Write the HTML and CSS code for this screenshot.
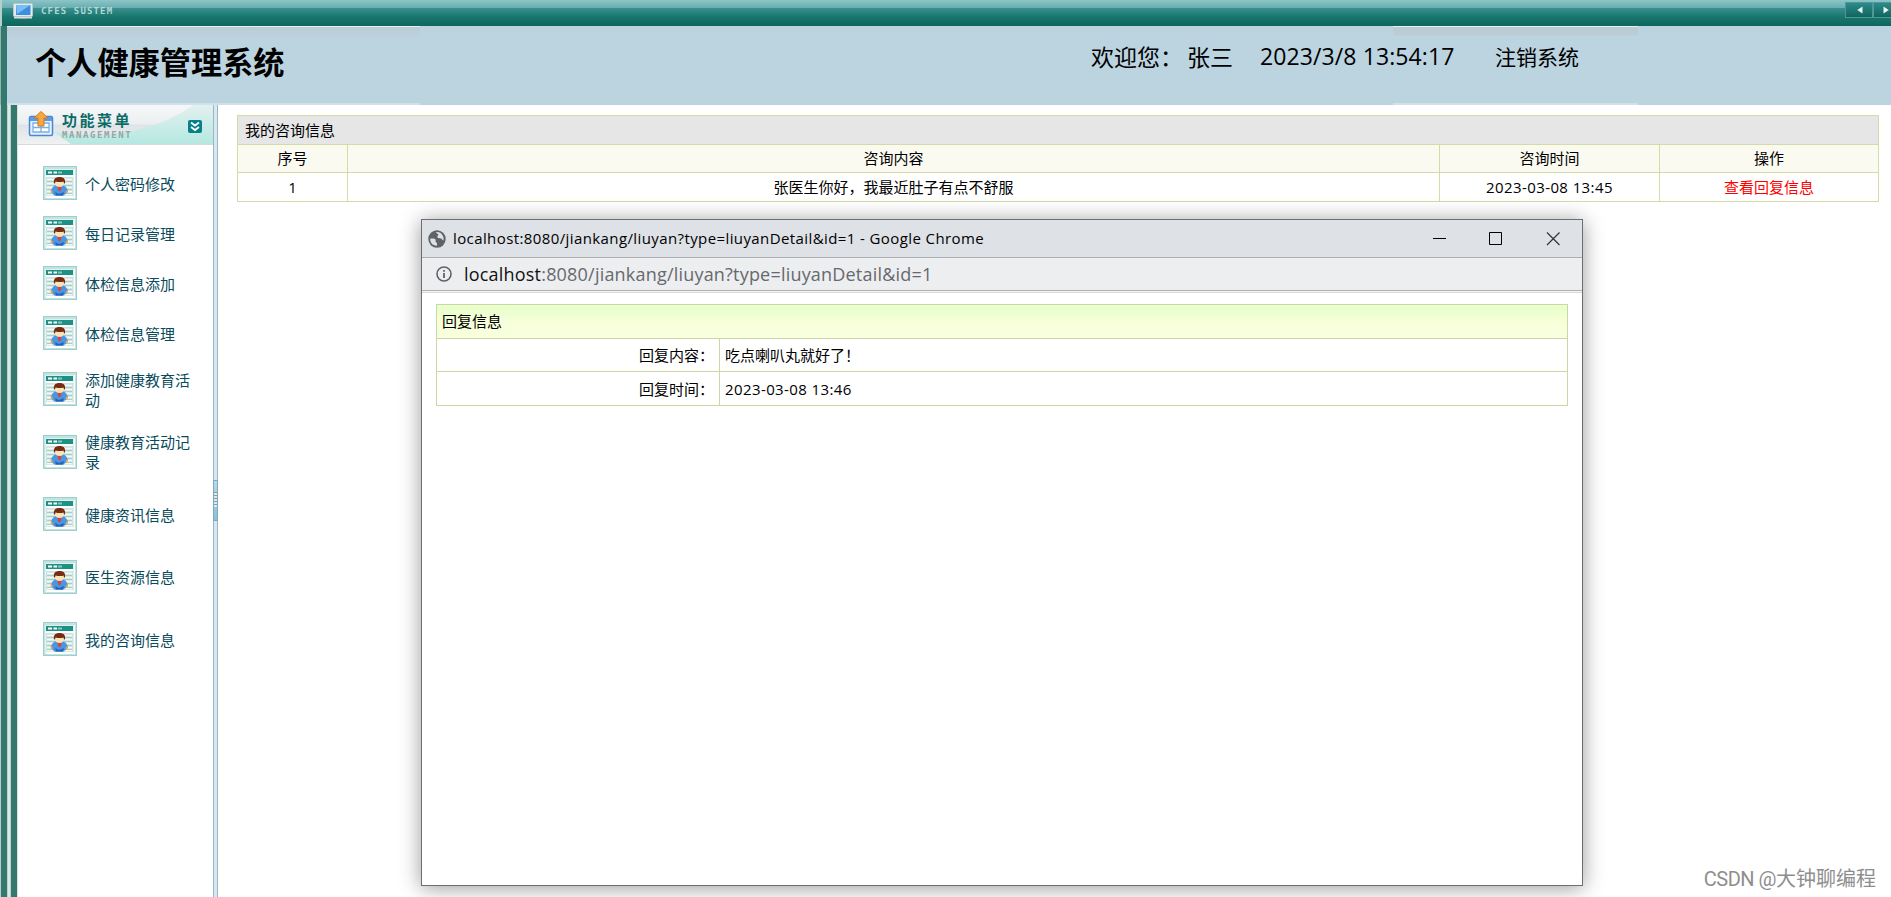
FILE: index.html
```
<!DOCTYPE html>
<html lang="zh-CN">
<head>
    <meta charset="UTF-8">
    <meta name="viewport" content="width=device-width, initial-scale=1.0">
    <title>个人健康管理系统</title>
    <link rel="stylesheet" href="styles.css">
</head>
<body>

<svg class="defs" width="0" height="0">
    <linearGradient id="wave" x1="0" y1="0" x2="0" y2="1">
        <stop offset="0" stop-color="#e3f1ef"/>
        <stop offset="1" stop-color="#b5e8e1"/>
    </linearGradient>
    <symbol id="user-card" viewBox="0 0 34 34">
        <rect x=".5" y=".5" width="33" height="33" fill="#c3e2e0" stroke="#9fcfcd"/>
        <path d="M32 3v29H3v-1h28V3z" fill="#fff"/>
        <rect x="2.500" y="3.500" width="28" height="28" fill="#fff"/>
        <rect x="3" y="4" width="27" height="5" fill="#1c9185"/>
        <path d="M5 6.500h4M10.500 6.500h3.500" stroke="#fff" stroke-width="2"/>
        <path d="M15 6.500h4" stroke="#8cc8c0" stroke-width="2"/>
        <rect x="3" y="11" width="27" height="19" fill="#cfe3e0"/>
        <path d="M4 13.500h25M4 17.500h25M4 21.500h25M4 25.500h25M4 28.500h25" stroke="#f3faf8" stroke-width="1.500"/>
        <path d="M4 15.500h25M4 19.500h25M4 23.500h25M4 27.500h25" stroke="#a9cdc8"/>
        <path d="M8 25c.5-3.500 3-5.500 5.500-5.500h6c2.500 0 4.500 2 5.500 5.500l-2.500 3-2.500 1.700h-8L9.500 28z" fill="#4a96e6"/>
        <path d="M12 26l4 2 5-2-1 3.500h-7z" fill="#2563b8"/>
        <path d="M14.500 20h4l-.5 4-1.500 1.500L15 24z" fill="#dc4238"/>
        <path d="M12 16c0-3 2-3.500 4.500-3.500s4.500.5 4.500 3.500-1.500 5-4.500 5-4.500-2-4.500-5z" fill="#fde4b5"/>
        <path d="M11 17.500c-.8-4.500 1.500-6.500 5.500-6.500s6.300 2 5.500 6.500h-1l-.5-2c-2 .8-5 .8-8 0l-.5 2z" fill="#762b12"/>
        <path d="M8 24l1.800 1.500-.3 2.500L7.500 26zM24.500 24l-1.800 1.500.3 2.500 2-2z" fill="#f5a13c"/>
    </symbol>
</svg>

<div class="topbar">
    <svg class="monitor" width="21" height="17" viewBox="0 0 21 17">
        <rect x=".5" y=".5" width="19" height="13" rx="1" fill="#e6eaee" stroke="#b8c6ce"/>
        <rect x="3" y="2" width="14.500" height="10" fill="#3b8fe0"/>
        <path d="M3 2h14.500L4 11z" fill="#7bbcf2"/>
        <path d="M1 14h18v1.500H1z" fill="#d8dde2"/>
        <path d="M7 15h6v1H7z" fill="#a8a8a0"/>
    </svg>
    <span class="brand">CFES SUSTEM</span>
    <div class="arrows">
        <svg viewBox="0 0 28 16"><path d="M18 4v8l-6-4z" fill="#e6f4f2"/></svg>
        <svg viewBox="0 0 28 16"><path d="M10 4v8l6-4z" fill="#e6f4f2"/></svg>
    </div>
</div>

<div class="header">
    <h1>个人健康管理系统</h1>
    <div class="welcome">
        <span class="hello">欢迎您：</span>
        <span class="name">张三</span>
        <span class="clock">2023/3/8 13:54:17</span>
        <a class="logout">注销系统</a>
    </div>
</div>

<div class="main">
    <div class="rail"></div>
    <div class="sidebar">
        <div class="menu-title">
            <svg class="menu-bg" width="195" height="39" viewBox="0 0 195 39">
                <path d="M36 27l17 12h142V0h-20c-12 9-32 20-62 26-25 5-50 5-77 1z" fill="url(#wave)"/>
            </svg>
            <svg class="upload" width="26" height="26" viewBox="0 0 26 26">
                <rect x="1.500" y="5.500" width="23" height="19" rx="1.500" fill="#e4f0fd" stroke="#4a86d8" stroke-width="1.500"/>
                <path d="M2 8h22" stroke="#5f9ae6" stroke-width="4"/>
                <path d="M5 12h16v9H5zM5 16.500h16M13 12v9" fill="#fff" stroke="#7baee8" stroke-width="1.300"/>
                <path d="M13 .5l7 6.500h-4v8h-6V7H6z" fill="#f6a83c" stroke="#c97b28"/>
            </svg>
            <div class="menu-name">
                <b>功能菜单</b>
                <small>MANAGEMENT</small>
            </div>
            <svg class="toggle" width="14" height="13" viewBox="0 0 14 13">
                <rect width="14" height="13" rx="2" fill="#087f8a"/>
                <path d="M3 2.500l4 3 4-3M3 7l4 3 4-3" fill="none" stroke="#fff" stroke-width="1.800"/>
            </svg>
        </div>
        <ul class="menu">
            <li><svg><use href="#user-card"/></svg><a>个人密码修改</a></li>
            <li><svg><use href="#user-card"/></svg><a>每日记录管理</a></li>
            <li><svg><use href="#user-card"/></svg><a>体检信息添加</a></li>
            <li><svg><use href="#user-card"/></svg><a>体检信息管理</a></li>
            <li class="tall"><svg><use href="#user-card"/></svg><a>添加健康教育活动</a></li>
            <li class="tall"><svg><use href="#user-card"/></svg><a>健康教育活动记录</a></li>
            <li class="tall"><svg><use href="#user-card"/></svg><a>健康资讯信息</a></li>
            <li class="tall"><svg><use href="#user-card"/></svg><a>医生资源信息</a></li>
            <li class="tall"><svg><use href="#user-card"/></svg><a>我的咨询信息</a></li>
        </ul>
    </div>
    <div class="splitter"><div class="grip"></div></div>
    <div class="content">
        <table class="list">
            <colgroup><col class="c-no"><col><col class="c-time"><col class="c-op"></colgroup>
            <tr class="caption"><td colspan="4">我的咨询信息</td></tr>
            <tr class="head">
                <td>序号</td>
                <td>咨询内容</td>
                <td>咨询时间</td>
                <td>操作</td>
            </tr>
            <tr class="row">
                <td>1</td>
                <td>张医生你好，我最近肚子有点不舒服</td>
                <td class="date">2023-03-08 13:45</td>
                <td><a class="reply">查看回复信息</a></td>
            </tr>
        </table>
    </div>
</div>

<div class="popup">
    <div class="popup-title">
        <svg class="globe" width="18" height="18" viewBox="0 0 18 18">
            <circle cx="9" cy="9" r="8.700" fill="#5f6368"/>
            <path d="M2.300 8.500c2 0 4-.5 5 .8 1 1.200-.5 2 .7 3 1 .8 1.500 1.500.8 3.500C4.500 15.500 1.800 12.500 2.300 8.500zM8 2.200c2-.4 4.500.3 6 2.200 1.500 2 2 4 1.400 6.200-1.200-.6-1.400-1.700-2.600-2-1.500-.3-3 0-3.500-1.500-.3-1.300 1.200-1.300 1-2.500C10 3.500 8.500 3.500 8 2.200z" fill="#dee1e6"/>
        </svg>
        <span class="popup-name">localhost:8080/jiankang/liuyan?type=liuyanDetail&amp;id=1 - Google Chrome</span>
        <svg class="buttons" width="128" height="14" viewBox="0 0 128 14" fill="none" stroke="#000">
            <path d="M0 6.500h13M56.500.5h12v12h-12z"/>
            <path d="M114 .5l12.500 12.500M126.500.5L114 13" stroke="#333" stroke-width="1.200"/>
        </svg>
    </div>
    <div class="popup-url">
        <svg width="16" height="16" viewBox="0 0 16 16">
            <circle cx="8" cy="8" r="7" fill="none" stroke="#5f6368" stroke-width="1.600"/>
            <path d="M8 7v5M8 4v1.800" stroke="#5f6368" stroke-width="1.800"/>
        </svg>
        <span class="url"><b>localhost</b>:8080/jiankang/liuyan?type=liuyanDetail&amp;id=1</span>
    </div>
    <div class="popup-body">
        <table class="detail">
            <colgroup><col class="c-label"><col></colgroup>
            <tr class="caption"><td colspan="2">回复信息</td></tr>
            <tr><td class="label">回复内容：</td><td>吃点喇叭丸就好了！</td></tr>
            <tr class="last"><td class="label">回复时间：</td><td class="date">2023-03-08 13:46</td></tr>
        </table>
    </div>
</div>

<div class="watermark"><span>CSDN @</span>大钟聊编程</div>

</body>
</html>
```
FILE: styles.css
```
* {
    box-sizing: border-box;
}
body {
    margin: 0;
    height: 897px;
    overflow: hidden;
    font-family: "Open Sans", "Noto Sans CJK SC", sans-serif;
    font-size: 15px;
    color: #000;
    background: #fff;
    display: flex;
    flex-direction: column;
}
.defs {
    position: absolute;
}
.topbar {
    height: 26px;
    flex: none;
    display: flex;
    padding-left: 11px;
    border-left: 2px solid #b5cfcb;
    background: linear-gradient(#8cc5c8 0, #68adb0 8px, #3a9191 8px, #17766d 17px, #0f675e 26px);
}
.monitor {
    margin-top: 3px;
}
.brand {
    margin: 5px 0 0 7px;
    font: 700 9px/13px "DejaVu Sans Mono", monospace;
    letter-spacing: 1.15px;
    color: #b4d6d4;
}
.arrows {
    width: 46px;
    height: 16px;
    margin: 2px 0 0 auto;
    display: flex;
    overflow: hidden;
}
.arrows svg {
    width: 28px;
    height: 16px;
    flex: none;
    background: linear-gradient(#2d8a89, #11655f);
    border: 1px solid #4c9a96;
}
.header {
    height: 79px;
    flex: none;
    display: flex;
    background:
        linear-gradient(#e4eff2 1px, #b9ccd6 1px, #bcd1dc 9px, transparent 12px) 7px 0 / 413px 12px no-repeat,
        linear-gradient(#e4f2ef 1px, #bacbd3 1px, #bbcdd6 9px, transparent 10px) 1393px 0 / 245px 10px no-repeat,
        linear-gradient(#cfe2ec, #cfe2ec) 7px 77px / 413px 2px no-repeat,
        linear-gradient(#cfe2ec, #cfe2ec) 1393px 77px / 245px 2px no-repeat,
        linear-gradient(90deg, #8fb5ae 0, #8fb5ae 1px, #34786e 1px, #34786e 7px, #bcd4e0 7px);
}
h1 {
    width: 1056px;
    margin: 14px 0 0 35px;
    font-size: 31.2px;
    line-height: 44px;
    font-weight: 700;
}
.welcome {
    display: flex;
    align-items: center;
    height: 40px;
    margin-top: 10px;
    font-size: 23px;
    white-space: nowrap;
}
.hello {
    width: 96px;
}
.name {
    width: 73px;
}
.clock {
    width: 235px;
    letter-spacing: 0.1px;
}
.logout {
    font-size: 21px;
}
.main {
    flex: 1;
    display: flex;
}
.rail {
    width: 18px;
    background: linear-gradient(90deg, #b5cfcb 0, #b5cfcb 1px, #34786e 1px, #34786e 7px, #a9c9c0 7px, #eef5f3 9px, #a9c9c0 11px, #34786e 11px, #34786e 17px, #d5e4e0 17px);
}
.sidebar {
    width: 195px;
}
.menu-title {
    position: relative;
    height: 40px;
    display: flex;
    border-bottom: 1px solid #d5dadb;
    background: linear-gradient(#f5f7f8 0, #eceff1 19px, #dfe3e6 20px, #f0f2f3 40px);
}
.menu-bg {
    position: absolute;
    left: 0;
    top: 0;
}
.upload {
    position: relative;
    margin: 6px 0 0 10px;
}
.menu-name {
    position: relative;
    margin: 4px 0 0 8px;
    width: 126px;
}
.menu-name b {
    display: block;
    font: 700 15px/21px "Noto Sans CJK SC", sans-serif;
    letter-spacing: 2.5px;
    color: #0d6c67;
}
.menu-name small {
    display: block;
    margin-top: 1px;
    font: 700 9px/9px "DejaVu Sans Mono", monospace;
    letter-spacing: 1.6px;
    color: #97a5a5;
}
.toggle {
    position: relative;
    margin-top: 15px;
}
.menu {
    list-style: none;
    margin: 13px 0 0;
    padding: 0 0 0 25px;
}
.menu li {
    height: 50px;
    display: flex;
    align-items: center;
}
.menu li.tall {
    height: 62.5px;
}
.menu svg {
    width: 34px;
    height: 34px;
    flex: none;
    margin-right: 8px;
}
.menu a {
    width: 108px;
    padding-top: 1px;
    line-height: 20px;
    color: #0a4b5c;
}
.splitter {
    width: 5px;
    display: flex;
    align-items: flex-start;
    background: linear-gradient(90deg, #9fb4c0 1px, #d6e8f4 1px, #d6e8f4 4px, #9fb4c0 4px);
}
.grip {
    width: 5px;
    height: 41px;
    margin-top: 375px;
    border: 1px solid #7fa9bf;
    background:
        repeating-linear-gradient(#8d9ba3 0, #8d9ba3 1px, #dcebf2 1px, #dcebf2 3px) 0 11px / 5px 15px no-repeat,
        linear-gradient(#b8d9e8, #8fbfd6);
}
.content {
    flex: 1;
    padding: 10px 12px 0 19px;
}
table {
    width: 100%;
    border-collapse: collapse;
    table-layout: fixed;
}
td {
    border: 1px solid #d3dca6;
    padding: 0;
    line-height: 20px;
}
.date {
    letter-spacing: 0.4px;
}
.list .c-no {
    width: 110px;
}
.list .c-time {
    width: 220px;
}
.list .c-op {
    width: 219px;
}
.list td {
    text-align: center;
}
.list .caption td {
    height: 29px;
    padding-left: 7px;
    text-align: left;
    background: #e6e6e6;
}
.list .head td {
    height: 28px;
    padding-bottom: 2px;
    background: #fafaf1;
}
.list .row td {
    height: 29px;
}
.reply {
    color: #f00;
}
.popup {
    position: absolute;
    left: 421px;
    top: 219px;
    width: 1162px;
    height: 667px;
    border: 1px solid #6c6e71;
    background: #fff;
    box-shadow: 0 2px 20px rgba(0, 0, 0, 0.4);
}
.popup-title {
    height: 38px;
    display: flex;
    align-items: center;
    padding-left: 6px;
    background: #dee1e6;
    border-bottom: 1px solid #adafb3;
}
.popup-name {
    margin: 0 0 2px 7px;
    width: 980px;
    letter-spacing: 0.4px;
    white-space: nowrap;
}
.popup-url {
    height: 35px;
    display: flex;
    align-items: center;
    padding: 0 0 3px 14px;
    background: linear-gradient(#edeef0 32px, #adafb3 32px, #adafb3 33px, #f5f5f5 33px, #f5f5f5 34px, #d8d9da 34px);
}
.url {
    margin-left: 12px;
    font-size: 18px;
    letter-spacing: 0.2px;
    color: #66696d;
}
.url b {
    font-weight: 400;
    color: #111;
}
.popup-body {
    padding: 11px 14px 0;
}
.detail td {
    height: 33px;
    padding-left: 5px;
    border-color: #c9d7a5;
}
.detail .caption td {
    height: 34px;
    padding-bottom: 2px;
    background: linear-gradient(#e6ffc8, #f6ffda 50%, #f9ffde);
}
.detail .last td {
    height: 34px;
}
.detail .c-label {
    width: 283px;
}
.detail .label {
    text-align: right;
    padding-right: 5px;
}
.watermark {
    position: absolute;
    right: 15px;
    bottom: 3px;
    font-family: "Noto Sans CJK SC", sans-serif;
    font-size: 20px;
    line-height: 30px;
    color: #8e8e8e;
}
.watermark span {
    font-family: Roboto, sans-serif;
    letter-spacing: -0.5px;
}
```
